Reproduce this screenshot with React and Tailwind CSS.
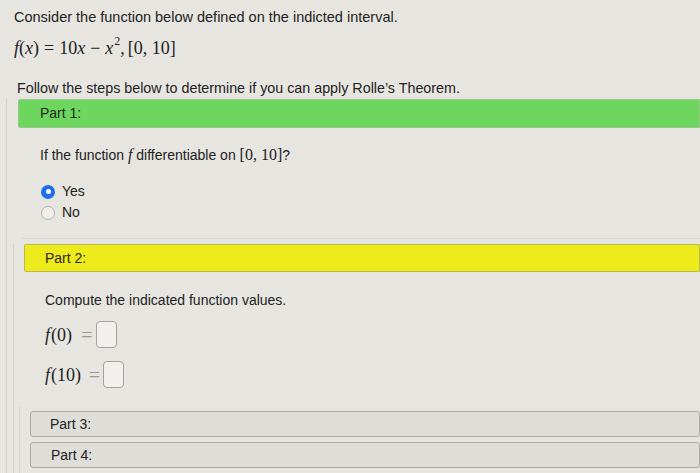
export default function App() {
  const serif = { fontFamily: '"Liberation Serif", "DejaVu Serif", serif' };
  return (
    <div className="w-[700px] h-[473px] overflow-hidden bg-[#e6e5e0] text-[#222] font-['Liberation_Sans',Arial,sans-serif]">
      <div className="pl-[14px] pt-[8px] text-[14.5px] leading-[18px]">
        Consider the function below defined on the indicted interval.
      </div>
      <div className="pl-[14px] mt-[12px] text-[18px] leading-[20px] h-[20px]" style={serif}>
        <i>f</i>(<i>x</i>)<span className="mx-[5px]">=</span>10<i>x</i>
        <span className="mx-[5px]">−</span>
        <i>x</i>
        <span className="inline-block align-top text-[12px] leading-none -mt-[3px] ml-[1px]">2</span>
        <span className="mr-[3px]">,</span>[0, 10]
      </div>
      <div className="pl-[17px] mt-[21px] text-[14.3px] leading-[18px]">
        Follow the steps below to determine if you can apply Rolle’s Theorem.
      </div>

      {/* Part 1 */}
      <div className="ml-[6px] mt-[2px] border-l border-[#d2d1cb]">
        <div className="ml-[11px] h-[29px] bg-[#6dd65f] border border-[#9cc58f] rounded-l-[2px] flex items-center pl-[21px] text-[14px] text-[#1f2a1c]">
          Part 1:
        </div>
        <div className="pl-[33px] mt-[18px] text-[14px] leading-[18px]">
          If the function <i className="text-[16px]" style={serif}>f</i> differentiable on{" "}
          <span className="text-[16px]" style={serif}>[0,&nbsp;10]</span>?
        </div>
        <div className="pl-[34px] mt-[17px] flex items-center h-[21px] text-[14px]">
          <span className="w-[14px] h-[14px] rounded-full bg-[#1f6fe6] flex items-center justify-center mr-[7px]">
            <span className="w-[5px] h-[5px] rounded-full bg-white"></span>
          </span>
          Yes
        </div>
        <div className="pl-[34px] flex items-center h-[21px] text-[14px]">
          <span className="w-[14px] h-[14px] rounded-full border border-[#b5b4af] bg-[#eeede9] mr-[7px]"></span>
          No
        </div>
        <div className="ml-[15px] mt-[15px] border-b border-[#d6d5cf]"></div>

        {/* Part 2 */}
        <div className="ml-[6px] mt-[5px] border-l border-[#d2d1cb]">
          <div className="ml-[10px] h-[28px] bg-[#eeeb1d] border border-[#bdba52] rounded-l-[2px] flex items-center pl-[20px] text-[14px] text-[#2a2a10]">
            Part 2:
          </div>
          <div className="pl-[31px] mt-[19px] text-[14px] leading-[18px]">
            Compute the indicated function values.
          </div>
          <div className="pl-[31px] mt-[12px] h-[27px] flex items-center text-[18px] leading-[20px]" style={serif}>
            <span className="w-[33px]"><i className="mr-[1px]">f</i>(0)</span>
            <span className="text-[#9a9994] w-[18px] text-center text-[20px] leading-[20px]">=</span>
            <span className="w-[21px] h-[27px] border border-[#a3a29d] rounded-[4px] bg-[#f1f0ec]"></span>
          </div>
          <div className="pl-[31px] mt-[13px] h-[27px] flex items-center text-[18px] leading-[20px]" style={serif}>
            <span className="w-[41px]"><i className="mr-[1px]">f</i>(10)</span>
            <span className="text-[#9a9994] w-[17px] text-center text-[20px] leading-[20px]">=</span>
            <span className="w-[21px] h-[27px] border border-[#a3a29d] rounded-[4px] bg-[#f1f0ec]"></span>
          </div>

          {/* Part 3 & 4 */}
          <div className="ml-[5px] mt-[19px] pt-[4px] border-l border-[#d2d1cb] pb-[8px]">
            <div className="ml-[10px] h-[26px] bg-[#deddd7] border border-[#aaa9a4] rounded-[3px] flex items-center pl-[19px] text-[14px]">
              Part 3:
            </div>
            <div className="ml-[10px] mt-[5px] h-[26px] bg-[#deddd7] border border-[#aaa9a4] rounded-[3px] flex items-center pl-[20px] text-[14px]">
              Part 4:
            </div>
          </div>
        </div>
      </div>
    </div>
  );
}
